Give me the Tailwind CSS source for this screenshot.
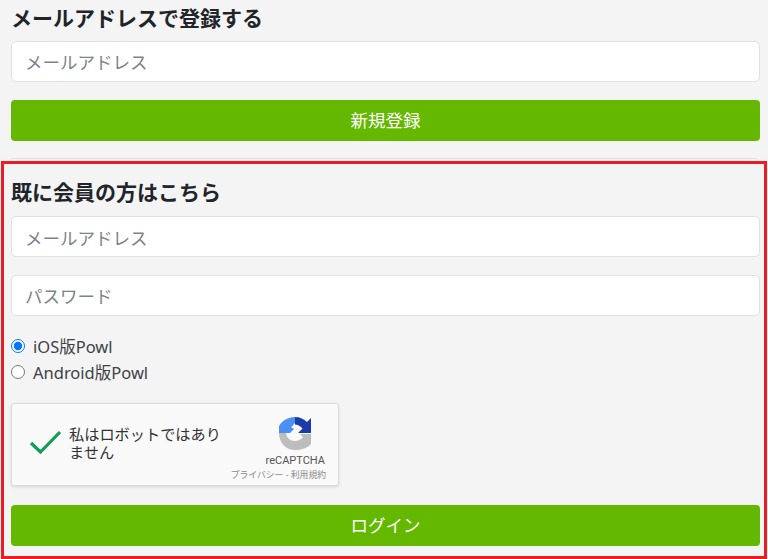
<!DOCTYPE html>
<html lang="ja">
<head>
    <meta charset="UTF-8">
    <meta name="viewport" content="width=device-width, initial-scale=1.0">
    <title>Powl ログイン</title>
    <script src="https://cdn.jsdelivr.net/npm/@tailwindcss/browser@4"></script>
</head>
<body class="bg-[#f4f4f4] h-[559px] overflow-hidden font-['Noto_Sans','Noto_Sans_CJK_JP',sans-serif] text-[#212529]">
    <!-- register -->
    <section class="px-[11px] h-[158px] flex flex-col">
        <h2 class="text-[21px] leading-[24px] font-bold mt-[6px] mb-[11px]">メールアドレスで登録する</h2>
        <input type="text" placeholder="メールアドレス" class="w-[749px] h-[41px] px-[13px] text-[17.5px] bg-white border border-[#dee2e6] rounded-[5px] placeholder:text-[#7d8389]">
        <button class="w-[749px] h-[41px] mt-[18px] bg-[#64b900] text-white text-[17.5px] rounded-[4px]">新規登録</button>
    </section>
    <div class="mx-[11px] h-px bg-[#e2e2e2]"></div>

    <!-- login, red frame -->
    <section class="mx-[1px] mt-[2px] w-[766px] h-[398px] border-[3px] border-[#ed1c24] px-[7px] flex flex-col">
        <h2 class="text-[21px] leading-[24px] font-bold mt-[16px] mb-[12px]">既に会員の方はこちら</h2>
        <input type="text" placeholder="メールアドレス" class="w-[749px] h-[41px] px-[13px] pt-[2px] text-[17.5px] bg-white border border-[#dee2e6] rounded-[5px] placeholder:text-[#7d8389]">
        <input type="password" placeholder="パスワード" class="w-[749px] h-[41px] mt-[18px] px-[13px] text-[17.5px] bg-white border border-[#dee2e6] rounded-[5px] placeholder:text-[#7d8389]">

        <div class="mt-[18px] flex flex-col text-[16.5px] leading-[26px] text-[#3c4248]">
            <label class="flex items-center gap-[8px]">
                <input type="radio" name="os" checked class="w-[14px] h-[14px] -mt-[3px] accent-[#0075ff]">
                <span>iOS版Powl</span>
            </label>
            <label class="flex items-center gap-[8px]">
                <input type="radio" name="os" class="w-[14px] h-[14px] -mt-[3px]">
                <span>Android版Powl</span>
            </label>
        </div>

        <!-- recaptcha -->
        <div class="mt-[17px] w-[328px] h-[83px] bg-[#f9f9f9] border border-[#dcdcdc] rounded-[3px] shadow-[0_1px_3px_rgba(0,0,0,0.12)] flex relative">
            <svg class="ml-[17px] mt-[25px] w-[33px] h-[26px]" viewBox="0 0 33 26" fill="none">
                <path d="M2 14l9.5 9L31 3" stroke="#0f9d58" stroke-width="3.2"/>
            </svg>
            <p class="ml-[7px] mt-[21px] w-[160px] text-[15.2px] leading-[18px] text-[#333]">私はロボットではありません</p>
            <div class="absolute right-[12px] top-[12px] w-[110px] flex flex-col items-end">
                <svg class="mr-[14px] w-[34px] h-[34px]" viewBox="0 0 34 34">
                    <path d="M17 1C10 1 4.500 4.500 1 10V17h11L16 13c-1 -1-2.500-1.500-3-1.500L17 7z" fill="#4a90f5"/>
                    <path d="M17 1c5 0 9 2 12 5l4-4v15H20l4.500-4.500C22 10 19.500 8.500 17 8.500z" fill="#1c3aa9"/>
                    <path d="M1 17h7c.5 4.500 4 8 9 8 3.500 0 6-1.500 8-4l-3-3h11L33 28c-3 3.500-9 6-16 6C8 34 1 27 1 17z" fill="#bdbdbd"/>
                </svg>
                <span class="mt-[4px] mr-[1px] text-[11px] leading-[13px] text-[#555] font-['Roboto',sans-serif]">reCAPTCHA</span>
                <span class="mt-[3px] text-[8.800px] leading-[11px] text-[#8a8a8a] whitespace-nowrap">プライバシー - 利用規約</span>
            </div>
        </div>

        <button class="w-[749px] h-[41px] mt-[19px] bg-[#64b900] text-white text-[17.5px] rounded-[4px]">ログイン</button>
    </section>
</body>
</html>
